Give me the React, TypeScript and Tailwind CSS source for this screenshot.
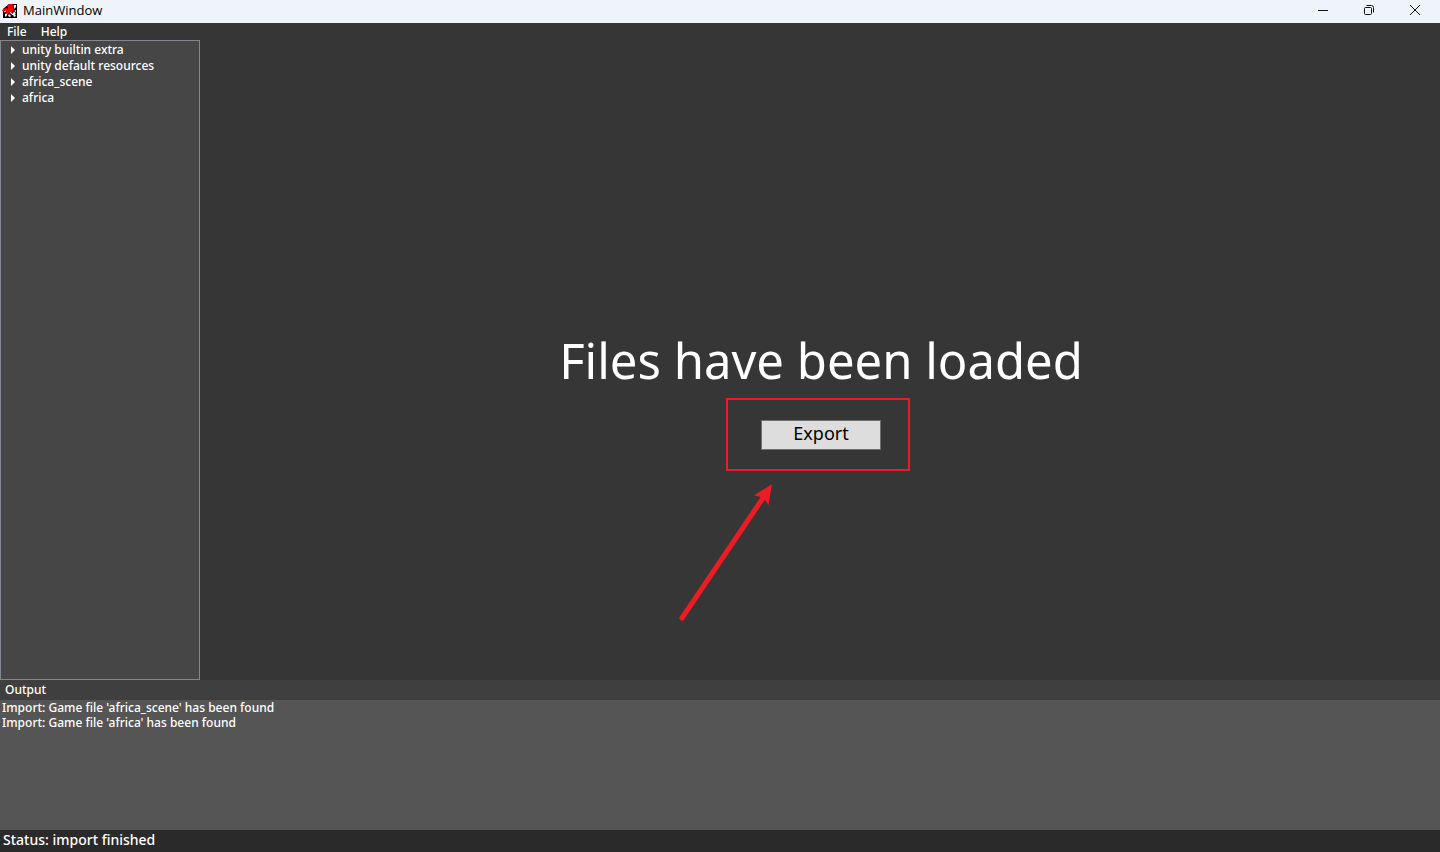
import { useState, type ReactNode } from "react";

const assetFiles = [
  "unity builtin extra",
  "unity default resources",
  "africa_scene",
  "africa",
];

const outputLines = [
  "Import: Game file 'africa_scene' has been found",
  "Import: Game file 'africa' has been found",
];

function AppLogo() {
  return (
    <svg width="16" height="16" viewBox="0 0 16 16" aria-hidden="true">
      <rect x="1" y="1" width="14" height="14" fill="#000" />
      <path d="M1 1h6L1 6z" fill="#eff3fa" />
      <path d="M12 2h2v2l-2 2zM12 8l2-1v2zM3 11l3-1-2 4-1-1zM6 13l1-2 2 2-1 1zM10 11l2-2 2 1-1 1 1 2-2 1-1-2z" fill="#fff" />
      <path
        d="M1 6l3-1 2 1V4L5 3l2-2h3l2 2-1 2 1 3-2 1 1 2-2 1-2-2-2 1-2-2-3-1z"
        fill="#ff0000"
      />
      <path d="M2 9l2-1M8 9l3 3" stroke="#fff" />
    </svg>
  );
}

function WindowButton({ label, children }: { label: string; children: ReactNode }) {
  return (
    <button
      aria-label={label}
      className="w-[46px] h-full pb-[3px] flex items-center justify-center hover:bg-black/10"
    >
      <svg width="12" height="12" viewBox="0 0 12 12" fill="none" stroke="#111">
        {children}
      </svg>
    </button>
  );
}

function TitleBar() {
  return (
    <header className="h-[23px] shrink-0 flex items-center bg-[#eff3fa] text-black">
      <div className="flex-1 flex items-center gap-[5px] pl-0.5 pb-px">
        <AppLogo />
        <h1 className="text-[13px] leading-4 pb-0.5 font-normal font-['Open_Sans',sans-serif]">
          MainWindow
        </h1>
      </div>
      <div className="flex h-full pr-0.5">
        <WindowButton label="Minimize">
          <path d="M1 6.5h10" />
        </WindowButton>
        <WindowButton label="Restore">
          <rect x="1.5" y="3.5" width="7" height="7" rx="1" />
          <path d="M3.5 1.5h5a2 2 0 0 1 2 2v5" />
        </WindowButton>
        <WindowButton label="Close">
          <path d="M1 1l10 10M11 1L1 11" />
        </WindowButton>
      </div>
    </header>
  );
}

function AssetTree() {
  const [selected, setSelected] = useState<string | null>(null);

  return (
    <aside className="w-[200px] mr-0.5 shrink-0 border border-[#828790] bg-[#464646] pt-px">
      <ul>
        {assetFiles.map((name) => (
          <li key={name}>
            <button
              onClick={() => setSelected(name)}
              className={`flex items-center gap-1.5 w-full h-4 pl-2.5 text-left leading-4 ${
                selected === name ? "bg-[#5a5a5a]" : ""
              }`}
            >
              <svg width="5" height="8" viewBox="0 0 5 8" aria-hidden="true">
                <path d="M0 0l4 4-4 4z" fill="#fff" />
              </svg>
              {name}
            </button>
          </li>
        ))}
      </ul>
    </aside>
  );
}

/** Red box and arrow that point the reader at the export button. */
function ExportCallout() {
  return (
    <div className="pointer-events-none" aria-hidden="true">
      <div className="absolute -left-[35px] -top-[22px] w-[184px] h-[73px] border-2 border-[#ed1c24]" />
      <svg
        className="absolute -left-[86px] top-[60px]"
        width="104"
        height="144"
        viewBox="0 0 104 144"
      >
        <path d="M7 138L88 18" stroke="#ed1c24" strokeWidth="5" strokeLinecap="round" />
        <path d="M97 4L79 15.5L86 17L90 20L93.5 25Z" fill="#ed1c24" />
      </svg>
    </div>
  );
}

export default function App() {
  return (
    <div className="h-screen flex flex-col overflow-hidden bg-[#363636] text-white text-[12px] leading-4 font-medium font-['Noto_Sans',sans-serif]">
      <TitleBar />

      <nav className="h-[17px] shrink-0 flex gap-3.5 pl-[7px]">
        <button className="leading-4">File</button>
        <button className="leading-4">Help</button>
      </nav>

      <div className="flex-1 min-h-0 flex">
        <AssetTree />
        <main className="flex-1 min-w-0 grid grid-rows-[1fr_auto_1fr] justify-items-center">
          <h2 className="row-start-2 text-[49px] leading-[72px] font-normal">
            Files have been loaded
          </h2>
          <div className="row-start-3 relative mt-6 self-start">
            <button className="block w-[120px] h-[30px] pb-1 border border-[#707070] bg-[#dddddd] text-black text-lg leading-6 font-normal">
              Export
            </button>
            <ExportCallout />
          </div>
        </main>
      </div>

      <section className="shrink-0">
        <h3 className="h-5 pl-[5px] leading-5 bg-[#3f3f40]">Output</h3>
        <div className="h-[130px] overflow-auto pl-0.5 bg-[#555555]">
          {outputLines.map((line) => (
            <p key={line} className="leading-[15px]">
              {line}
            </p>
          ))}
        </div>
      </section>

      <footer className="h-[22px] shrink-0 pl-[3px] bg-[#2a2a2a] text-sm leading-5 font-medium">
        Status: import finished
      </footer>
    </div>
  );
}
